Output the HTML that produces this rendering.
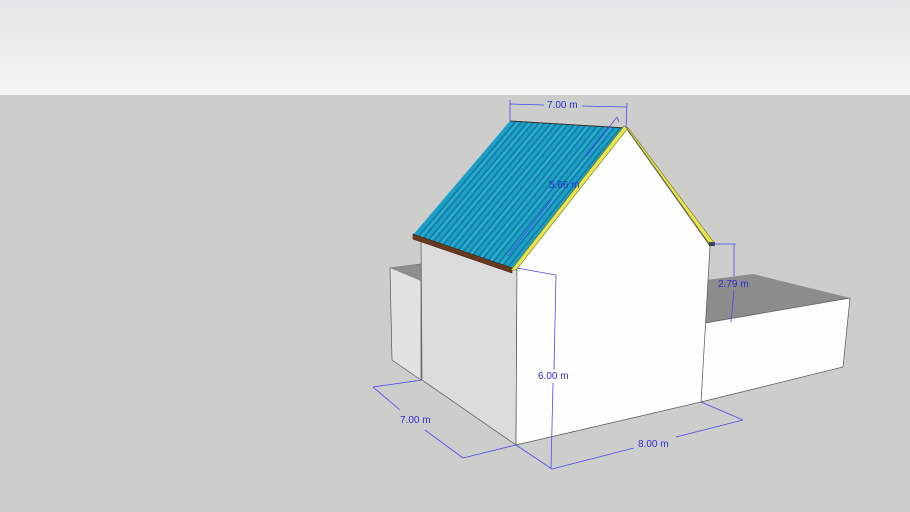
<!DOCTYPE html>
<html><head><style>
html,body{margin:0;padding:0;width:910px;height:512px;overflow:hidden;background:#cdcdcc}
svg{display:block}
text{font-family:"Liberation Sans",sans-serif;font-size:10px;fill:#2c2cd0}
</style></head><body>
<svg width="910" height="512" viewBox="0 0 910 512">
<defs>
<linearGradient id="sky" x1="0" y1="0" x2="0" y2="1">
<stop offset="0" stop-color="#e4e5e6"/><stop offset="1" stop-color="#f5f5f5"/>
</linearGradient>
</defs>
<rect x="0" y="0" width="910" height="95" fill="url(#sky)"/>
<rect x="0" y="95" width="910" height="417" fill="#cdcdcc"/>

<!-- left small box -->
<polygon points="390,268 421,264 421,380 392,360" fill="#e2e2e2" stroke="#555" stroke-width="0.7"/>
<polygon points="390,268 421,264 421,281" fill="#8e8e8e"/>
<!-- side wall -->
<polygon points="421,240 517,268 516,445 422,380" fill="#dcdcdc" stroke="#555" stroke-width="0.7"/>
<!-- right annex -->
<polygon points="707,280 753,274 850,298 705,323" fill="#8c8c8c"/>
<polygon points="705,323 850,298 843,367 701,402" fill="#fdfdfd" stroke="#555" stroke-width="0.7"/>
<!-- front gable wall -->
<polygon points="517,266 626,128 710,246 701,402 516,445" fill="#fefefe" stroke="#555" stroke-width="0.7"/>
<!-- roof -->
<polygon points="510,121 626,128 512,270 413,235" fill="#1c9ec6"/>
<g stroke="#0f6f8e" stroke-width="1">
<line x1="515.8" y1="121.4" x2="418" y2="236.8"/>
<line x1="521.6" y1="121.7" x2="423" y2="238.5"/>
<line x1="527.4" y1="122.1" x2="428" y2="240.3"/>
<line x1="533.2" y1="122.4" x2="432.8" y2="242"/>
<line x1="539" y1="122.8" x2="437.7" y2="243.8"/>
<line x1="544.8" y1="123.1" x2="442.7" y2="245.5"/>
<line x1="550.6" y1="123.5" x2="447.6" y2="247.3"/>
<line x1="556.4" y1="123.8" x2="452.6" y2="249"/>
<line x1="562.2" y1="124.2" x2="457.5" y2="250.8"/>
<line x1="568" y1="124.5" x2="462.5" y2="252.5"/>
<line x1="573.8" y1="124.9" x2="467.5" y2="254.3"/>
<line x1="579.6" y1="125.2" x2="472.4" y2="256"/>
<line x1="585.4" y1="125.6" x2="477.4" y2="257.8"/>
<line x1="591.2" y1="125.9" x2="482.3" y2="259.5"/>
<line x1="597" y1="126.3" x2="487.3" y2="261.3"/>
<line x1="602.8" y1="126.6" x2="492.2" y2="263"/>
<line x1="608.6" y1="127" x2="497.2" y2="264.8"/>
<line x1="614.4" y1="127.3" x2="502.1" y2="266.5"/>
<line x1="620.2" y1="127.7" x2="507.1" y2="268.3"/>
</g>
<g stroke="#5fc6e4" stroke-width="0.6" opacity="0.8">
<line x1="518.7" y1="121.6" x2="420.5" y2="237.6"/>
<line x1="530.3" y1="122.3" x2="430.4" y2="241.1"/>
<line x1="541.9" y1="123" x2="440.2" y2="244.6"/>
<line x1="553.5" y1="123.7" x2="450.1" y2="248.1"/>
<line x1="565.1" y1="124.4" x2="460" y2="251.6"/>
<line x1="576.7" y1="125.1" x2="469.9" y2="255.1"/>
<line x1="588.3" y1="125.8" x2="479.8" y2="258.6"/>
<line x1="599.9" y1="126.5" x2="489.7" y2="262.1"/>
<line x1="611.5" y1="127.2" x2="499.6" y2="265.6"/>
</g>
<line x1="510" y1="121" x2="626" y2="128" stroke="#333" stroke-width="1"/>
<!-- eave -->
<polygon points="413,234 512,268 512,273 413,239" fill="#6a3a1c" stroke="#3a2010" stroke-width="0.6"/>
<!-- yellow fascia -->
<polygon points="624,126 628,128 516,270 511,270" fill="#e8e64a" stroke="#6b6b20" stroke-width="0.6"/>
<polygon points="626,127 629,129 715,244 711,246" fill="#e8e64a" stroke="#6b6b20" stroke-width="0.6"/>
<rect x="709" y="242" width="6" height="4" fill="#444"/>

<!-- dimensions -->
<g stroke="#4b4bf0" stroke-width="0.8" fill="none">
<line x1="510" y1="104" x2="544" y2="105"/><line x1="582" y1="106" x2="627" y2="107"/>
<line x1="510" y1="100" x2="510" y2="121"/><line x1="627" y1="103" x2="626" y2="128"/>
<line x1="617" y1="117" x2="586" y2="157"/>
<line x1="552" y1="199" x2="508" y2="256"/>
<line x1="617" y1="117" x2="619" y2="122"/>
<line x1="712" y1="244" x2="736" y2="244"/>
<line x1="734" y1="244" x2="734" y2="276"/><line x1="734" y1="290" x2="731" y2="322"/>
<line x1="517" y1="268" x2="556" y2="275"/>
<line x1="556" y1="275" x2="554" y2="370"/><line x1="553" y1="383" x2="551" y2="469"/>
<line x1="516" y1="445" x2="552" y2="469"/>
<line x1="422" y1="380" x2="373" y2="387"/>
<line x1="373" y1="387" x2="400" y2="410"/><line x1="425" y1="430" x2="463" y2="458"/>
<line x1="516" y1="445" x2="463" y2="458"/>
<line x1="552" y1="469" x2="634" y2="448"/><line x1="676" y1="437" x2="743" y2="420"/>
<line x1="701" y1="402" x2="743" y2="420"/>
</g>
<text x="547" y="108">7.00 m</text>
<text x="549" y="188">5.66 m</text>
<text x="718" y="287">2.79 m</text>
<text x="538" y="379">6.00 m</text>
<text x="400" y="423">7.00 m</text>
<text x="638" y="447">8.00 m</text>
</svg>
</body></html>
